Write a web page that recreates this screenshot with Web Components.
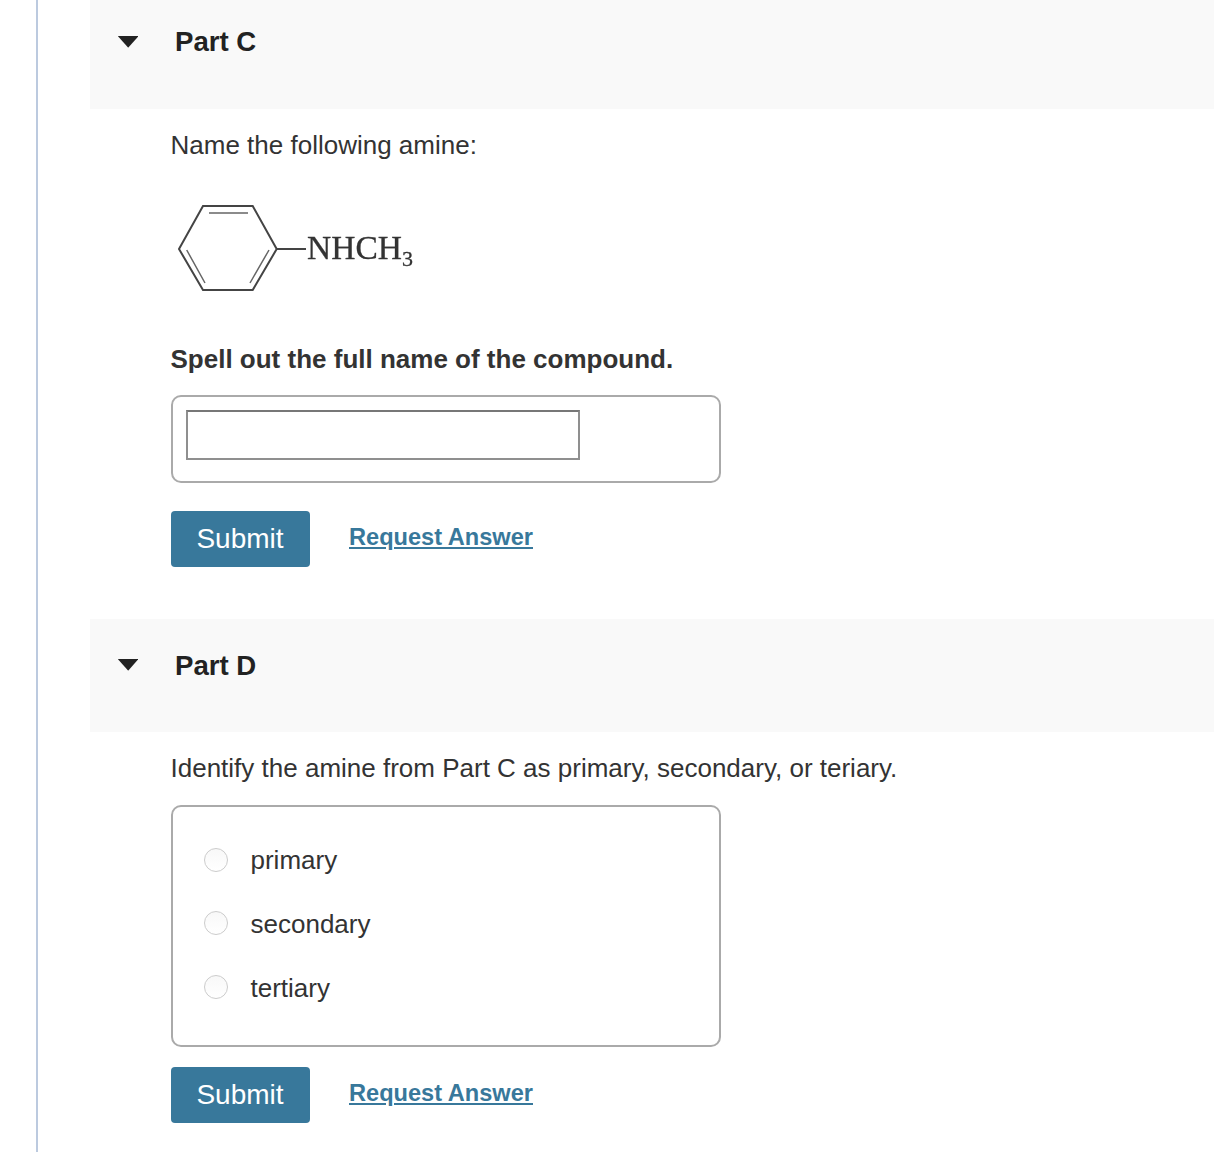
<!DOCTYPE html>
<html><head><meta charset="utf-8">
<style>
html,body{margin:0;padding:0;background:#fff;height:1152px;overflow:hidden}
body{font-family:"Liberation Sans",Arial,sans-serif;color:#333}
.p{font:26px/32px "Liberation Sans",Arial,sans-serif;color:#333;margin-left:-.5px}
.s{font:bold 26px/32px "Liberation Sans",Arial,sans-serif;color:#333;margin-left:-.5px}
</style></head><body>
<template id="t-part">
<style>
:host{display:block}
.head{background:#f9f9f9;display:flex;align-items:flex-start;height:var(--h,109px);box-sizing:border-box;padding-top:var(--pt,26px)}
.arrow{width:20px;height:12px;margin:var(--at,10px) 0 0 28px;flex:none}
h2{margin:0 0 0 37px;font:bold 27.6px/32px "Liberation Sans",Arial,sans-serif;color:#222}
.body{padding:var(--bt,20px) 0 0 81px}
</style>
<div class="head"><svg class="arrow" viewBox="0 0 20 12"><path d="M0 0.3Q0 0 .4 0H20.1Q20.5 0 20.2 .4L10.6 11.2Q10.2 11.6 9.8 11.2L.2 .6Z" fill="#222"/></svg><h2><slot name="title"></slot></h2></div>
<div class="body"><slot></slot></div>
</template>
<template id="t-actions">
<style>
:host{display:flex;align-items:flex-start}
.btn{width:139px;height:56px;padding:0 1px 0 0;box-sizing:border-box;background:#38789b;color:#fff;border-radius:4px;display:flex;align-items:center;justify-content:center;font:28px/32px "Liberation Sans",Arial,sans-serif}
a{margin:13px 0 0 39px;font:bold 23.6px/26px "Liberation Sans",Arial,sans-serif;color:#38789b;text-decoration:underline}
</style>
<div class="btn">Submit</div><a href="#" onclick="return false">Request Answer</a>
</template>
<template id="t-box">
<style>
:host{display:block;box-sizing:border-box;width:550px;border:2px solid #aaa;border-radius:10px;background:#fff}
</style>
<slot></slot>
</template>
<template id="t-radio">
<style>
:host{display:flex;align-items:center;height:64px}
.r{width:24px;height:24px;box-sizing:border-box;border-radius:50%;border:1.5px solid #ccc;background:linear-gradient(#f8f8f8,#fff);margin:0 0 var(--rb,0) 31px;flex:none}
span{margin-left:22.5px;font:26px/32px "Liberation Sans",Arial,sans-serif;color:#333}
</style>
<div class="r"></div><span><slot></slot></span>
</template>
<template id="t-mol">
<style>
:host{display:block;width:250px;height:100px}
svg{filter:blur(.45px);display:block}
text{font-family:"Liberation Serif","Times New Roman",serif;fill:#333;stroke:#333;stroke-width:.3px}
</style>
<svg width="250" height="100" viewBox="0 0 250 100">
<g fill="none" stroke="#444" stroke-width="2">
<path d="M32 4H81.7L105.7 47L81.7 88H32L8 47Z"/>
<path d="M38 11H77M15.7 48L34 81M98 48L79 81" stroke-width="1.5" stroke="#666"/>
<path d="M106 47H135"/>
</g>
<text x="136" y="57" font-size="33.5">NHCH<tspan font-size="22" dy="7">3</tspan></text>
</svg>
</template>
<template id="t-page">
<style>
:host{display:block;margin-left:36px;border-left:2px solid #bccadf;height:1152px;padding-left:52px;box-sizing:content-box}
</style>
<slot></slot>
</template>
<template id="t-input">
<style>
:host{display:block;box-sizing:border-box;width:394px;height:50px;border:2px solid #8f8f8f;border-top-color:#777;background:#fff}
</style>
</template>
<x-page>
<x-part>
<span slot="title">Part C</span>
<div class="p">Name the following amine:</div>
<x-mol style="margin-top:41px"></x-mol>
<div class="s" style="margin-top:41px">Spell out the full name of the compound.</div>
<x-box style="height:88px;padding:13px;margin-top:20px"><x-input></x-input></x-box>
<x-actions style="margin-top:28px"></x-actions>
</x-part>
<x-part style="margin-top:52px;--h:113px;--pt:31px;--at:9px">
<span slot="title">Part D</span>
<div class="p">Identify the amine from Part C as primary, secondary, or teriary.</div>
<x-box style="height:242px;padding-top:21px;margin-top:21px">
<x-radio>primary</x-radio><x-radio style="--rb:2px">secondary</x-radio><x-radio style="--rb:2px">tertiary</x-radio>
</x-box>
<x-actions style="margin-top:20px"></x-actions>
</x-part>
</x-page>
<script>
for(const [tag,id] of [['x-page','t-page'],['x-part','t-part'],['x-actions','t-actions'],['x-box','t-box'],['x-radio','t-radio'],['x-mol','t-mol'],['x-input','t-input']]){
 customElements.define(tag,class extends HTMLElement{constructor(){super();this.attachShadow({mode:'open'}).appendChild(document.getElementById(id).content.cloneNode(true));}});
}
</script>
</body></html>
